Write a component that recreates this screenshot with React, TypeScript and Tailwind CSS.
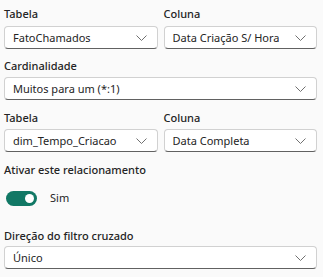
import React from "react";

const Chevron = () => (
  <svg width="11" height="6" viewBox="0 0 11 6" className="shrink-0">
    <polyline points="0.5,0.5 5.5,5.5 10.5,0.5" fill="none" stroke="#707070" strokeWidth="1" />
  </svg>
);

const Select = ({ value, className = "" }: { value: string; className?: string }) => (
  <div
    className={`flex h-[23px] items-center justify-between rounded-[4px] border border-[#d1d1d1] border-b-[#616161] bg-white pl-[8px] pr-[10px] text-[11px] text-[#242424] ${className}`}
  >
    <span className="truncate leading-[16px]">{value}</span>
    <Chevron />
  </div>
);

const Label = ({ children, className = "" }: { children: React.ReactNode; className?: string }) => (
  <div className={`h-[16px] text-[11px] font-medium leading-[16px] text-[#242424] ${className}`}>{children}</div>
);

export default function App() {
  return (
    <div
      className="h-[277px] w-[323px] bg-[#fafafa] pl-[4px] pr-[6px] pt-[6px]"
      style={{ fontFamily: "'Noto Sans', 'Open Sans', sans-serif" }}
    >
      <div className="grid grid-cols-2 gap-x-[6px]">
        <div>
          <Label>Tabela</Label>
          <Select value="FatoChamados" className="mt-[4px]" />
        </div>
        <div>
          <Label>Coluna</Label>
          <Select value="Data Criação S/ Hora" className="mt-[4px]" />
        </div>
      </div>
      <Label className="mt-[9px]">Cardinalidade</Label>
      <Select value="Muitos para um (*:1)" className="mt-[3px]" />
      <div className="mt-[10px] grid grid-cols-2 gap-x-[6px]">
        <div>
          <Label>Tabela</Label>
          <Select value="dim_Tempo_Criacao" className="mt-[3px]" />
        </div>
        <div>
          <Label>Coluna</Label>
          <Select value="Data Completa" className="mt-[3px]" />
        </div>
      </div>
      <Label className="mt-[10px]">Ativar este relacionamento</Label>
      <div className="mt-[12px] flex items-center pl-[2px]">
        <div className="flex h-[15px] w-[31px] items-center justify-end rounded-full bg-[#117865] pr-[3px]">
          <div className="h-[9px] w-[9px] rounded-full bg-white" />
        </div>
        <span className="ml-[13px] text-[11px] leading-[16px] text-[#242424]">Sim</span>
      </div>
      <Label className="mt-[22px]">Direção do filtro cruzado</Label>
      <Select value="Único" className="mt-[2px]" />
    </div>
  );
}
